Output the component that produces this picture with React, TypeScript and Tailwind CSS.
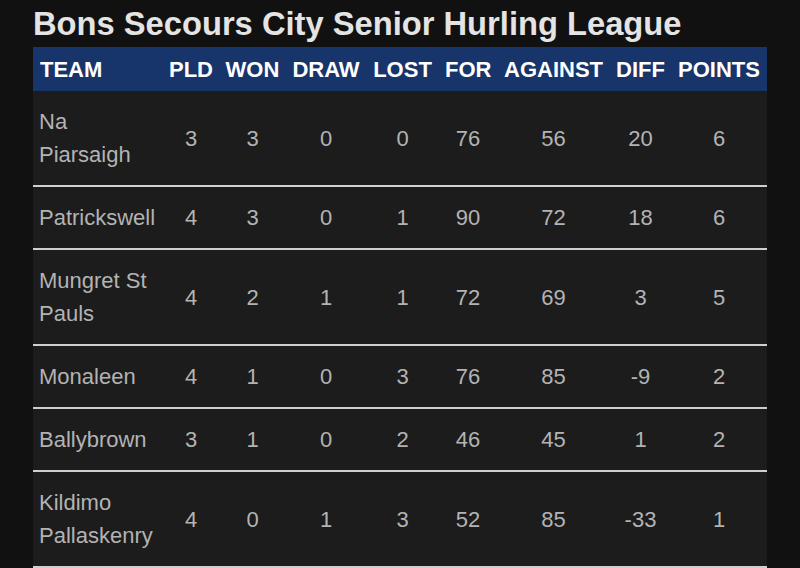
const rows = [
  { team: "Na Piarsaigh", pld: 3, won: 3, draw: 0, lost: 0, for: 76, against: 56, diff: 20, points: 6 },
  { team: "Patrickswell", pld: 4, won: 3, draw: 0, lost: 1, for: 90, against: 72, diff: 18, points: 6 },
  { team: "Mungret St Pauls", pld: 4, won: 2, draw: 1, lost: 1, for: 72, against: 69, diff: 3, points: 5 },
  { team: "Monaleen", pld: 4, won: 1, draw: 0, lost: 3, for: 76, against: 85, diff: -9, points: 2 },
  { team: "Ballybrown", pld: 3, won: 1, draw: 0, lost: 2, for: 46, against: 45, diff: 1, points: 2 },
  { team: "Kildimo Pallaskenry", pld: 4, won: 0, draw: 1, lost: 3, for: 52, against: 85, diff: -33, points: 1 },
]

const headers = ["PLD", "WON", "DRAW", "LOST", "FOR", "AGAINST", "DIFF", "POINTS"]

export default function App() {
  return (
    <div className="w-[800px] h-[568px] overflow-hidden bg-[#111111] font-['Liberation_Sans',Arial,sans-serif]">
      <div className="px-[33px]">
        <h1 className="h-[47px] leading-[48px] text-[32.7px] font-bold text-[#e4e4e4] whitespace-nowrap">
          Bons Secours City Senior Hurling League
        </h1>
        <div className="bg-[#1c1c1c] h-[521px]">
          <table className="w-[734px] table-fixed border-collapse">
            <colgroup>
              <col className="w-[130px]" />
              <col className="w-[56px]" />
              <col className="w-[67px]" />
              <col className="w-[80px]" />
              <col className="w-[73px]" />
              <col className="w-[58px]" />
              <col className="w-[113px]" />
              <col className="w-[61px]" />
              <col className="w-[96px]" />
            </colgroup>
            <thead>
              <tr className="bg-[#17346b] h-[44px]">
                <th className="pl-[7px] pr-[4px] text-left text-[22px] font-bold text-white">TEAM</th>
                {headers.map((h) => (
                  <th key={h} className="px-[6px] text-center text-[22px] font-bold text-white whitespace-nowrap">
                    {h}
                  </th>
                ))}
              </tr>
            </thead>
            <tbody>
              {rows.map((r) => (
                <tr key={r.team} className="border-b-2 border-[#cfcfcf]">
                  <td className="pl-[6px] pr-[4px] py-[14px] text-left text-[22px] leading-[33px] text-[#b3b3b3]">{r.team}</td>
                  {[r.pld, r.won, r.draw, r.lost, r.for, r.against, r.diff, r.points].map((v, i) => (
                    <td key={i} className="py-[14px] text-center text-[22px] leading-[33px] text-[#b3b3b3]">
                      {v}
                    </td>
                  ))}
                </tr>
              ))}
            </tbody>
          </table>
        </div>
      </div>
    </div>
  )
}
